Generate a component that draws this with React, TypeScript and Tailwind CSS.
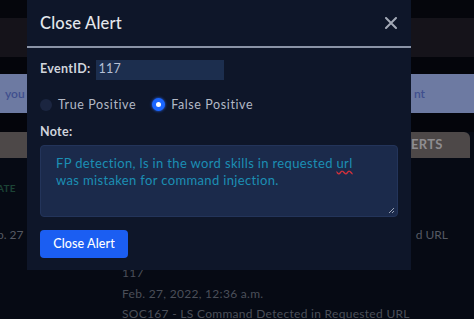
import React from "react";

export default function App() {
  return (
    <div
      className="relative w-[474px] h-[319px] overflow-hidden bg-[#060a14]"
      style={{ fontFamily: "Lato, 'Open Sans', sans-serif" }}
    >
      {/* dimmed page behind the modal */}
      <div className="flex flex-col">
        <div className="h-[18px] bg-[#05060c]" />
        <div className="h-[39px] bg-[#15131a]" />
        <div className="h-[17px] bg-[#04050b]" />
        <div className="h-[39px] bg-[#6d7aa2] flex items-center text-[12px] font-semibold text-[#3f4f8e]">
          <span className="ml-[5px]">you</span>
          <span className="ml-auto mr-[49px]">nt</span>
        </div>
        <div className="h-[19px] bg-[#04050b]" />
        <div className="h-[26px] w-[470px] bg-[#4d4848] rounded-tr-[6px] flex items-center text-[13px] font-bold text-[#8f8d90] tracking-wide">
          <span className="ml-[411px]">ERTS</span>
        </div>
        <div className="h-[23px]" />
        <div className="h-[14px] flex items-center text-[10px] font-bold text-[#1c4436] tracking-wide">
          <span className="-ml-[3px]">ATE</span>
        </div>
        <div className="h-[33px]" />
        <div className="h-[14px] flex items-center text-[12px] text-[#555963]">
          <span className="-ml-[3px]">b. 27</span>
          <span className="ml-auto mr-[26px]">d URL</span>
        </div>
        <div className="h-[25px]" />
        <div className="pl-[122px] flex flex-col text-[12px] text-[#4b4f59] tracking-[0.3px]">
          <span className="h-[16px] leading-[16px] -mt-[2px]">117</span>
          <span className="h-[21px] leading-[21px] mt-[2px]">Feb. 27, 2022, 12:36 a.m.</span>
          <span className="h-[20px] leading-[20px]">SOC167 - LS Command Detected in Requested URL</span>
        </div>
      </div>

      {/* modal */}
      <div className="absolute left-[27px] top-0 w-[384px] h-[270px] bg-[#0e1629] flex flex-col">
        <div className="h-[46px] flex items-center justify-between pl-[13px] pr-[13px]">
          <span className="text-[16.5px] font-medium text-[#e4e7ec] tracking-[0.2px]">Close Alert</span>
          <svg width="12" height="12" viewBox="0 0 12 12" className="mr-[1px]">
            <path d="M1 1 L11 11 M11 1 L1 11" stroke="#a3a9b6" strokeWidth="2" strokeLinecap="round" />
          </svg>
        </div>
        <div className="h-[1.5px] bg-[#8a93a6]" />
        <div className="flex flex-col px-[13px]">
          <div className="mt-[12px] flex items-center gap-[5px]">
            <span className="text-[12.5px] font-bold text-[#d0d4dc] tracking-[0.3px]">EventID:</span>
            <div className="w-[128px] h-[20px] bg-[#1c2e4e] flex items-center pl-[3px] text-[12.5px] text-[#b7c1d6] tracking-[0.3px]">
              117
            </div>
          </div>
          <div className="mt-[16px] flex items-center text-[12.5px] text-[#b3b9c6] tracking-[0.6px]">
            <span className="w-[12px] h-[12px] rounded-full bg-[#1b2540]" />
            <span className="ml-[6px]">True Positive</span>
            <span className="ml-[16px] w-[13px] h-[13px] rounded-full bg-[#1a66ff] flex items-center justify-center shadow-[0_0_3px_#2a6cff]">
              <span className="w-[5px] h-[5px] rounded-full bg-white" />
            </span>
            <span className="ml-[6px]">False Positive</span>
          </div>
          <div className="mt-[9px] text-[12.5px] font-bold text-[#d0d4dc] tracking-[0.3px]">Note:</div>
          <div className="relative mt-[3px] w-[358px] h-[72px] bg-[#1b2a4b] rounded-[4px] border border-[#23345a] pl-[15px] pt-[9px] text-[13px] leading-[17px] text-[#1b8fb4] tracking-[0.35px]">
            FP detection, ls in the word skills in requested{" "}
            <span className="underline decoration-wavy decoration-[#d6303a] underline-offset-[2px]">url</span>
            <br />
            was mistaken for command injection.
            <svg width="7" height="7" viewBox="0 0 7 7" className="absolute right-[2px] bottom-[2px]">
              <path d="M1 6 L6 1 M4 6 L6 4" stroke="#9aa3b6" strokeWidth="1" />
            </svg>
          </div>
          <div className="mt-[13px]">
            <button className="w-[88px] h-[28px] rounded-[4px] bg-[#1b5ef2] text-white text-[12.5px] font-medium tracking-[0.1px]">
              Close Alert
            </button>
          </div>
        </div>
      </div>
    </div>
  );
}
